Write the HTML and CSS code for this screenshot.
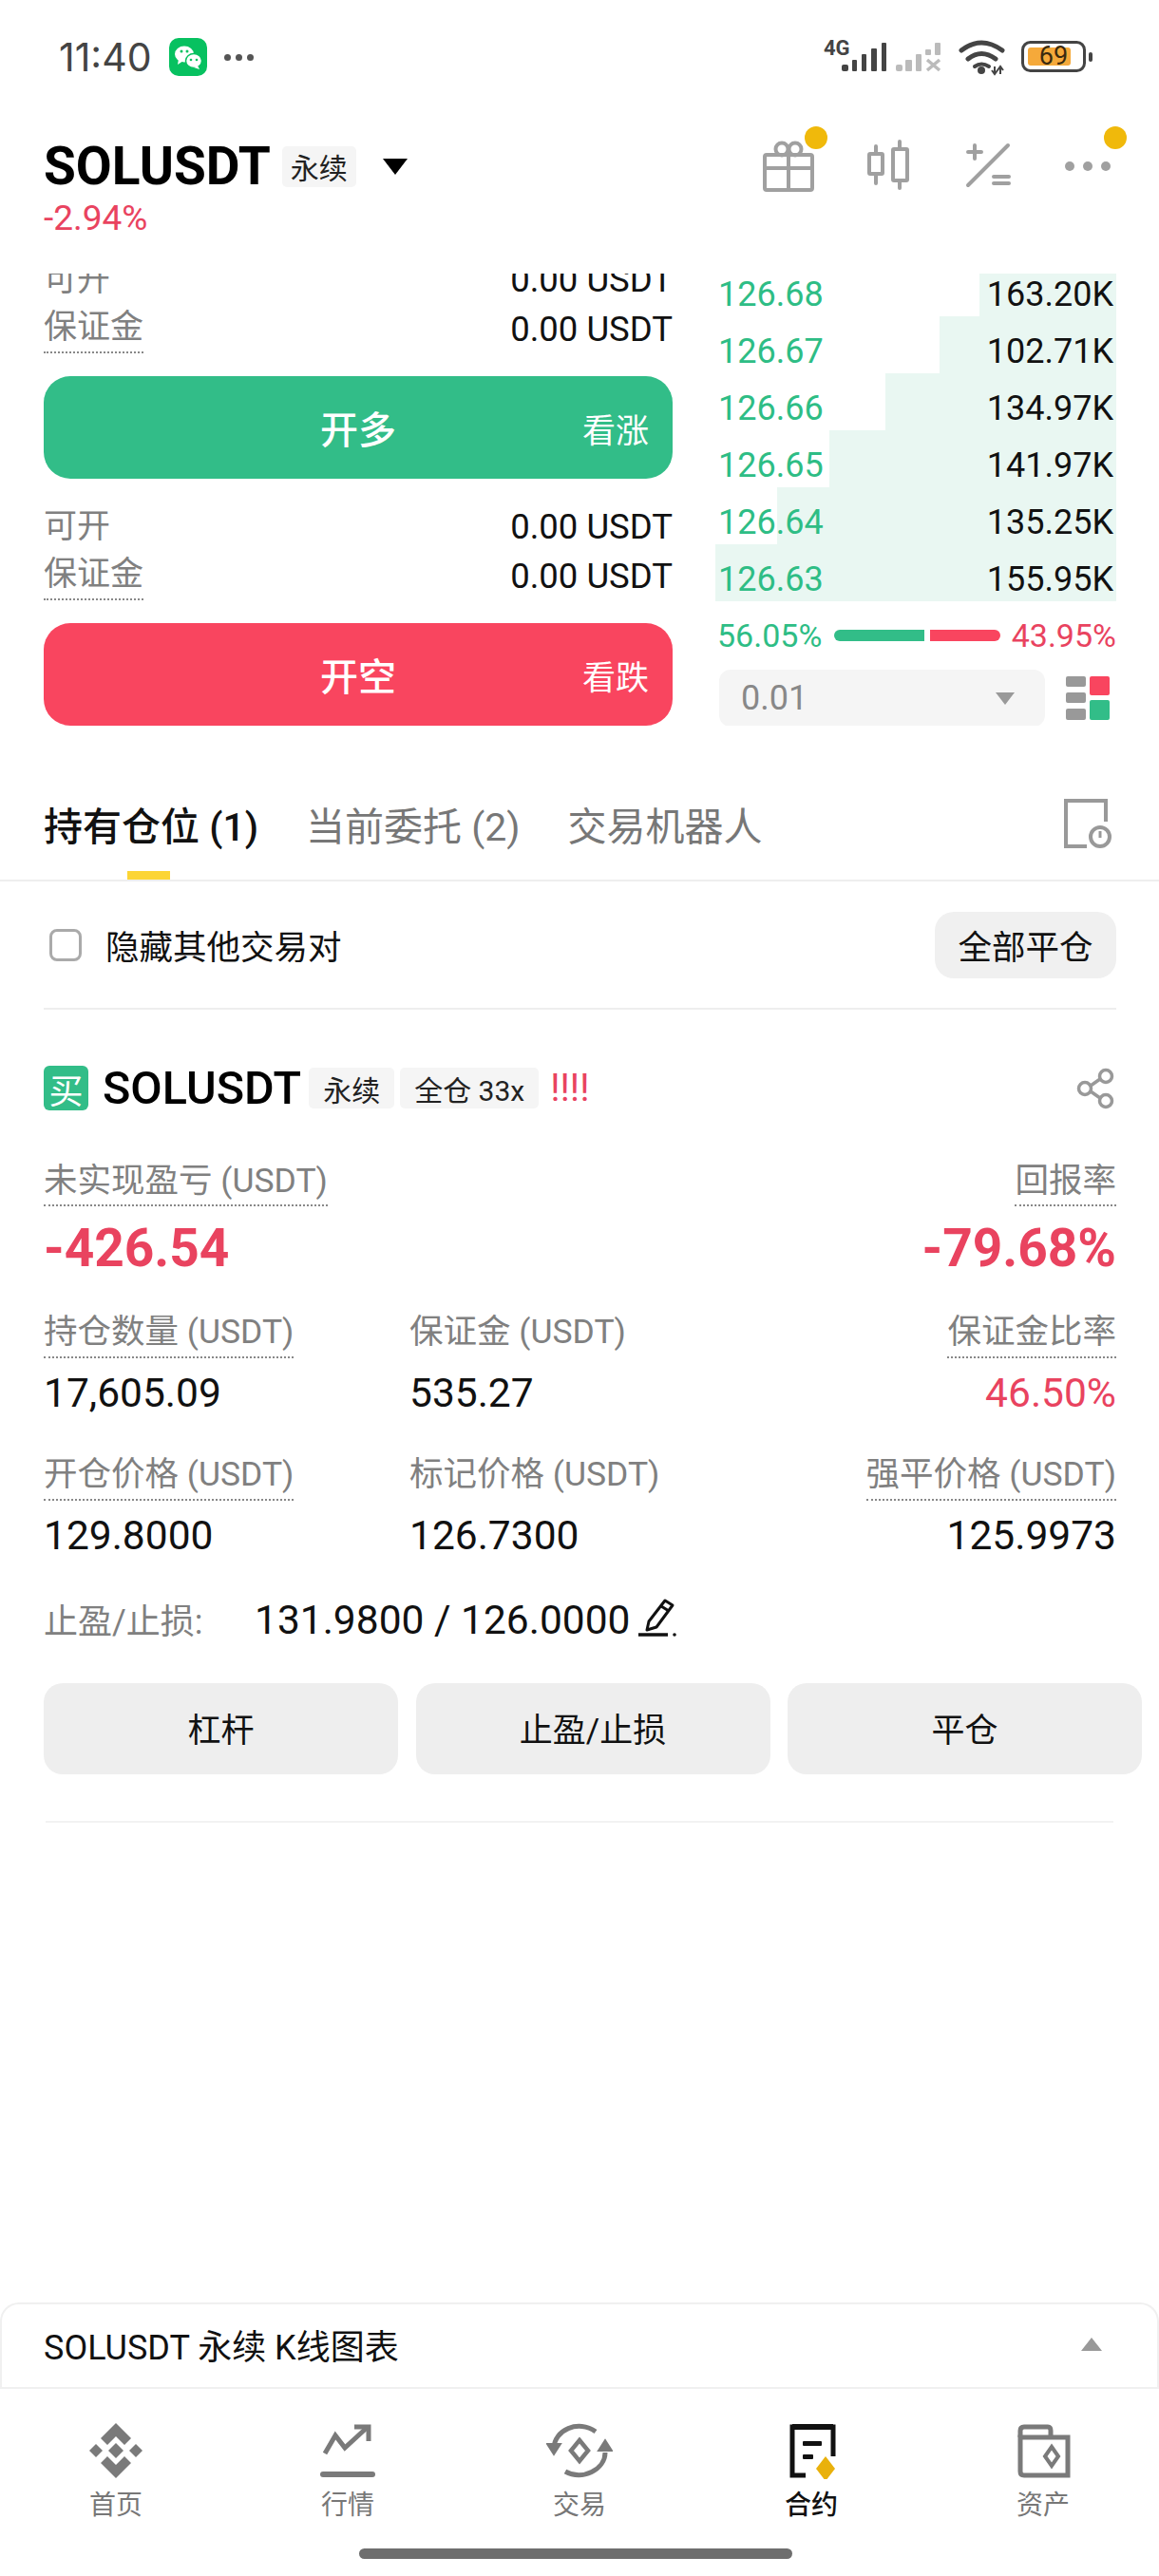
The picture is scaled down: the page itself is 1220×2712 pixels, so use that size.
FILE: index.html
```html
<!DOCTYPE html>
<html lang="zh-CN">
<head>
    <meta charset="UTF-8">
    <meta name="viewport" content="width=device-width, initial-scale=1.0">
    <title>SOLUSDT 永续</title>
    <link rel="stylesheet" href="styles.css">
</head>
<body>
    <!-- Status bar -->
    <div class="status-bar">
        <span class="status-time">11:40</span>
        <svg class="wechat" viewBox="0 0 40 40">
            <rect width="40" height="40" rx="10" fill="#07c160"/>
            <ellipse cx="16" cy="17" rx="10" ry="8.5" fill="#fff"/>
            <path d="M10 22 L9 28 L15 24 Z" fill="#fff"/>
            <ellipse cx="26" cy="24" rx="8.5" ry="7.5" fill="#fff" stroke="#07c160" stroke-width="1.5"/>
            <path d="M30 29 L32 33 L26 31 Z" fill="#fff"/>
            <circle cx="13" cy="14" r="1.5" fill="#07c160"/><circle cx="19" cy="14" r="1.5" fill="#07c160"/>
            <circle cx="23" cy="23" r="1.3" fill="#07c160"/><circle cx="29" cy="23" r="1.3" fill="#07c160"/>
        </svg>
        <span class="status-dots"><i></i><i></i><i></i></span>
        <svg class="status-icons" viewBox="0 0 290 40">
            <text class="net-label" x="1" y="18">4G</text>
            <g fill="#444">
                <rect x="20" y="28" width="7" height="7" rx="2"/><rect x="31" y="23" width="5" height="12" rx="1"/>
                <rect x="41" y="17" width="5" height="18" rx="1"/><rect x="51" y="11" width="6" height="24" rx="1"/>
                <rect x="62" y="5" width="5" height="30" rx="1"/>
            </g>
            <g fill="#bbb">
                <rect x="77" y="28" width="7" height="7" rx="2"/><rect x="87" y="23" width="7" height="12" rx="1"/>
                <rect x="98" y="17" width="6" height="18" rx="1"/><rect x="108" y="12" width="6" height="6" rx="1"/>
                <rect x="118" y="5" width="6" height="13" rx="1"/>
                <path d="M110 23 L123 34 M123 23 L110 34" stroke="#bbb" stroke-width="3.5"/>
            </g>
            <g fill="none" stroke="#444" stroke-width="5" stroke-linecap="round">
                <path d="M146 13 Q167 -3 189 13"/>
                <path d="M153 22 Q167 11 182 22"/>
                <path d="M160 30 Q167 25 175 30" stroke-width="4"/>
            </g>
            <circle cx="167" cy="34" r="4" fill="#444"/>
            <path d="M181 30 V38 M178 34 L181 38 L184 34 M187 38 V30 M184 34 L187 30 L190 34" fill="none" stroke="#444" stroke-width="2"/>
            <rect x="210.5" y="4.5" width="65" height="30" rx="8" fill="none" stroke="#444" stroke-width="3"/>
            <rect x="216" y="10" width="45" height="19" rx="3" fill="#f5a93a"/>
            <rect x="280" y="15" width="4" height="10" rx="2" fill="#444"/>
            <text class="batt-label" x="243" y="28">69</text>
        </svg>
    </div>

    <!-- Symbol header -->
    <div class="symbol-bar">
        <span class="symbol">SOLUSDT</span>
        <span class="tag tag-head">永续</span>
        <span class="caret"></span>
        <div class="symbol-tools">
            <span class="tool tool-dot">
                <svg width="60" height="60" viewBox="0 0 60 60" fill="none" stroke="#a0a0a0" stroke-width="4" stroke-linejoin="round">
                    <rect x="5" y="18" width="50" height="37" rx="2"/>
                    <path d="M5 32 H55 M30 18 V55"/>
                    <circle cx="23" cy="12" r="6.5"/><circle cx="37" cy="12" r="6.5"/>
                </svg>
            </span>
            <span class="tool">
                <svg width="60" height="60" viewBox="0 0 60 60" fill="none" stroke="#a0a0a0" stroke-width="4" stroke-linecap="round" stroke-linejoin="round">
                    <rect x="10" y="17" width="14" height="21" rx="1"/><path d="M17 9 V17 M17 38 V48"/>
                    <rect x="35" y="12" width="15" height="33" rx="1"/><path d="M42 4 V12 M42 45 V53"/>
                </svg>
            </span>
            <span class="tool">
                <svg width="60" height="60" viewBox="0 0 60 60" fill="none" stroke="#a0a0a0" stroke-width="4" stroke-linecap="round">
                    <path d="M51 8 L9 50"/>
                    <path d="M9 15 H23 M16 8 V22"/>
                    <path d="M36 41 H52 M36 48 H52"/>
                </svg>
            </span>
            <span class="tool tool-dot">
                <svg width="60" height="60" viewBox="0 0 60 60" fill="#a0a0a0">
                    <circle cx="11" cy="30" r="5"/><circle cx="30" cy="30" r="5"/><circle cx="49" cy="30" r="5"/>
                </svg>
            </span>
        </div>
    </div>
    <div class="symbol-change">-2.94%</div>

    <!-- Order form + order book -->
    <div class="trade">
        <div class="trade-form">
            <div class="form-row"><span class="form-label">可开</span><span>0.00 USDT</span></div>
            <div class="form-row"><span class="form-label dotted">保证金</span><span>0.00 USDT</span></div>
            <div class="order-btn long"><span class="order-title">开多</span><span class="order-side">看涨</span></div>
            <div class="form-row"><span class="form-label">可开</span><span>0.00 USDT</span></div>
            <div class="form-row"><span class="form-label dotted">保证金</span><span>0.00 USDT</span></div>
            <div class="order-btn short"><span class="order-title">开空</span><span class="order-side">看跌</span></div>
        </div>
        <div class="book">
            <div class="book-row"><span class="book-bar" style="width:144px"></span><span class="book-price">126.68</span><span class="book-qty">163.20K</span></div>
            <div class="book-row"><span class="book-bar" style="width:186px"></span><span class="book-price">126.67</span><span class="book-qty">102.71K</span></div>
            <div class="book-row"><span class="book-bar" style="width:243px"></span><span class="book-price">126.66</span><span class="book-qty">134.97K</span></div>
            <div class="book-row"><span class="book-bar" style="width:302px"></span><span class="book-price">126.65</span><span class="book-qty">141.97K</span></div>
            <div class="book-row"><span class="book-bar" style="width:357px"></span><span class="book-price">126.64</span><span class="book-qty">135.25K</span></div>
            <div class="book-row"><span class="book-bar" style="width:422px"></span><span class="book-price">126.63</span><span class="book-qty">155.95K</span></div>
            <div class="book-ratio">
                <span class="up">56.05%</span>
                <span class="ratio-bars"><i class="ratio-buy"></i><i class="ratio-sell"></i></span>
                <span class="down">43.95%</span>
            </div>
            <div class="book-tools">
                <div class="depth-select"><span>0.01</span><i class="select-caret"></i></div>
                <div class="book-mode">
                    <i class="mode-gray"></i><i class="mode-red"></i>
                    <i class="mode-gray"></i><i class="mode-green"></i>
                    <i class="mode-gray"></i>
                </div>
            </div>
        </div>
    </div>

    <!-- Tabs -->
    <div class="tabs">
        <span class="tab active">持有仓位 (1)</span>
        <span class="tab">当前委托 (2)</span>
        <span class="tab">交易机器人</span>
        <svg class="tabs-history" width="56" height="56" viewBox="0 0 56 56" fill="none" stroke="#999" stroke-width="4">
            <path d="M46 26 V4 H4 V52 H26"/>
            <circle cx="40" cy="42" r="10"/>
            <path d="M40 36 V43" stroke-width="3"/>
        </svg>
    </div>

    <div class="filter">
        <label class="filter-check"><i class="checkbox"></i>隐藏其他交易对</label>
        <span class="close-all">全部平仓</span>
    </div>

    <!-- Position card -->
    <div class="position">
        <div class="position-head">
            <span class="side-badge">买</span>
            <span class="position-symbol">SOLUSDT</span>
            <span class="tag">永续</span>
            <span class="tag">全仓 33x</span>
            <span class="warn">!!!!</span>
            <svg class="share" width="44" height="44" viewBox="0 0 44 44" fill="none" stroke="#999" stroke-width="3.5">
                <circle cx="32" cy="9" r="6.5"/><circle cx="10" cy="22" r="6.5"/><circle cx="32" cy="35" r="6.5"/>
                <path d="M16 19 L26 12 M16 25 L26 32"/>
            </svg>
        </div>
        <div class="pnl">
            <div>
                <span class="stat-label pnl-label dotted">未实现盈亏 (USDT)</span>
                <div class="pnl-value down">-426.54</div>
            </div>
            <div class="align-right">
                <span class="stat-label pnl-label dotted">回报率</span>
                <div class="pnl-value down">-79.68%</div>
            </div>
        </div>
        <div class="stats">
            <div><span class="stat-label dotted">持仓数量 (USDT)</span><div class="stat-value">17,605.09</div></div>
            <div><span class="stat-label">保证金 (USDT)</span><div class="stat-value">535.27</div></div>
            <div class="align-right"><span class="stat-label dotted">保证金比率</span><div class="stat-value down">46.50%</div></div>
            <div><span class="stat-label dotted">开仓价格 (USDT)</span><div class="stat-value">129.8000</div></div>
            <div><span class="stat-label">标记价格 (USDT)</span><div class="stat-value">126.7300</div></div>
            <div class="align-right"><span class="stat-label dotted">强平价格 (USDT)</span><div class="stat-value">125.9973</div></div>
        </div>
        <div class="tpsl">
            <span class="tpsl-label">止盈/止损:</span>
            <span class="stat-value">131.9800 / 126.0000</span>
            <svg class="pencil" width="42" height="40" viewBox="0 0 42 40" fill="none" stroke="#111" stroke-width="3" stroke-linejoin="round">
                <path d="M29 2 L37 7 L20 30 L10 33 L12 24 Z"/>
                <path d="M25 8 L33 13"/>
                <path d="M1 38 H32" stroke-width="3.5"/>
                <circle cx="39" cy="38" r="1.8" fill="#111" stroke="none"/>
            </svg>
        </div>
        <div class="actions">
            <span class="action">杠杆</span>
            <span class="action">止盈/止损</span>
            <span class="action">平仓</span>
        </div>
        <div class="position-end"></div>
    </div>

    <!-- Chart drawer -->
    <div class="chart-drawer">
        <span>SOLUSDT 永续 K线图表</span>
        <i class="drawer-caret"></i>
    </div>

    <!-- Bottom nav -->
    <div class="nav">
        <div class="nav-item">
            <svg width="60" height="60" viewBox="0 0 60 60" fill="#7a7a7a">
                <path d="M30 1 L46 17 L39 24 L30 15 L21 24 L14 17 Z"/>
                <path d="M30 59 L46 43 L39 36 L30 45 L21 36 L14 43 Z"/>
                <path d="M9 23 L16 30 L9 37 L2 30 Z"/>
                <path d="M51 23 L58 30 L51 37 L44 30 Z"/>
                <path d="M30 22 L38 30 L30 38 L22 30 Z"/>
            </svg>
            <span>首页</span>
        </div>
        <div class="nav-item">
            <svg width="60" height="60" viewBox="0 0 60 60" fill="none" stroke="#7a7a7a" stroke-width="5">
                <path d="M6 33 L17 14 L27 27 L50 6"/>
                <path d="M37 5 H52 V20" stroke-width="5"/>
                <path d="M4 55 H56" stroke-width="6" stroke-linecap="round"/>
            </svg>
            <span>行情</span>
        </div>
        <div class="nav-item">
            <svg width="70" height="60" viewBox="0 0 70 60" fill="none" stroke="#7a7a7a" stroke-width="5">
                <path d="M8 28 C8 8 34 -3 52 10"/>
                <path d="M62 32 C62 50 38 62 20 52"/>
                <path d="M1 23 L8 34 L15 23 Z" fill="#7a7a7a" stroke-width="2"/>
                <path d="M55 30 L62 19 L69 30 Z" fill="#7a7a7a" stroke-width="2"/>
                <path d="M35 19 L44 30 L35 41 L26 30 Z" stroke-width="4.5"/>
            </svg>
            <span>交易</span>
        </div>
        <div class="nav-item active">
            <svg width="60" height="60" viewBox="0 0 60 60">
                <path d="M24 56 H10 V5 H53 V36" fill="none" stroke="#111" stroke-width="5"/>
                <path d="M10 5 H53" stroke="#111" stroke-width="6"/>
                <rect x="21" y="20" width="20" height="5" rx="1" fill="#111"/>
                <rect x="21" y="34" width="11" height="5" rx="1" fill="#111"/>
                <path d="M45 36 L55 49 L45 62 L35 49 Z" fill="#e9b10c"/>
            </svg>
            <span>合约</span>
        </div>
        <div class="nav-item">
            <svg width="60" height="60" viewBox="0 0 60 60" fill="none" stroke="#7a7a7a" stroke-width="5">
                <path d="M6 16 V9 Q6 5 10 5 H35 Q38 5 38 9 V16"/>
                <path d="M6 16 H56 V56 H10 Q6 56 6 52 Z"/>
                <path d="M39 26 L46 36 L39 46 L32 36 Z" stroke-width="4"/>
            </svg>
            <span>资产</span>
        </div>
        <div class="home-bar"></div>
    </div>
</body>
</html>
```

FILE: styles.css
```css
/* General */
* {
    box-sizing: border-box;
}

body {
    margin: 0;
    width: 1220px;
    height: 2712px;
    display: flex;
    flex-direction: column;
    overflow: hidden;
    background: #fff;
    color: #111;
    font-family: "Roboto", "Noto Sans CJK SC", sans-serif;
    font-size: 35px;
}

i {
    display: block;
}

.up {
    color: #2ebd85;
}

.down {
    color: #e9435f;
}

.align-right {
    text-align: right;
}

.dotted {
    border-bottom: 2px dotted #888;
}

/* Status bar */
.status-bar {
    height: 130px;
    padding: 0 64px 10px 62px;
    display: flex;
    align-items: center;
    flex-shrink: 0;
}

.status-time {
    font-family: "Inter", sans-serif;
    font-size: 41px;
    color: #444;
    width: 116px;
}

.wechat {
    width: 40px;
    height: 40px;
}

.status-dots {
    display: flex;
    gap: 5px;
    margin-left: 18px;
}

.status-dots i {
    width: 7px;
    height: 7px;
    border-radius: 50%;
    background: #555;
}

.status-icons {
    width: 290px;
    height: 40px;
    margin-left: auto;
    overflow: visible;
}

.net-label {
    font-size: 22px;
    font-weight: 700;
    fill: #444;
}

.batt-label {
    font-size: 27px;
    fill: #3a2a10;
    text-anchor: middle;
}

/* Symbol header */
.symbol-bar {
    height: 90px;
    padding-left: 46px;
    display: flex;
    align-items: center;
    flex-shrink: 0;
}

.symbol {
    font-size: 55px;
    font-weight: 700;
    color: #000;
}

.tag {
    height: 43px;
    padding: 0 15px;
    display: flex;
    align-items: center;
    background: #f5f5f5;
    border-radius: 5px;
    font-size: 30px;
    color: #222;
}

.tag-head {
    margin-left: 12px;
    padding: 0 9px;
}

.caret {
    width: 0;
    height: 0;
    margin-left: 28px;
    border-left: 13px solid transparent;
    border-right: 13px solid transparent;
    border-top: 17px solid #000;
}

.symbol-tools {
    margin-left: auto;
    padding-right: 23px;
    display: flex;
}

.tool {
    width: 105px;
    display: flex;
    justify-content: center;
    position: relative;
}

.tool-dot::after {
    content: "";
    position: absolute;
    left: 70px;
    top: -12px;
    width: 24px;
    height: 24px;
    border-radius: 50%;
    background: #f0b90b;
}

.symbol-change {
    height: 76px;
    margin-top: -8px;
    padding-left: 46px;
    font-size: 37px;
    line-height: 36px;
    color: #e9435f;
    flex-shrink: 0;
}

/* Order form + book */
.trade {
    height: 476px;
    padding: 0 45px 0 46px;
    display: flex;
    gap: 45px;
    overflow: hidden;
    flex-shrink: 0;
}

.trade-form {
    width: 662px;
    margin-top: -18px;
    flex-shrink: 0;
}

.form-row {
    height: 50px;
    margin-bottom: 2px;
    display: flex;
    justify-content: space-between;
    align-items: flex-start;
    line-height: 50px;
    font-size: 36.5px;
}

.form-label {
    height: 50px;
    line-height: 50px;
    font-size: 35px;
    color: #808080;
}

.form-label.dotted {
    line-height: 46px;
}

.order-btn {
    height: 108px;
    margin: 24px 0 26px;
    border-radius: 28px;
    color: #fff;
    position: relative;
    display: flex;
    align-items: center;
    justify-content: center;
}

.order-btn.long {
    background: #32bd88;
}

.order-btn.short {
    background: #f9455f;
}

.order-title {
    font-size: 40px;
    font-weight: 500;
}

.order-side {
    position: absolute;
    right: 25px;
    font-size: 35px;
}

.book {
    width: 422px;
    margin-top: -15px;
}

.book-row {
    height: 60px;
    padding: 14px 3px 0 3px;
    display: flex;
    justify-content: space-between;
    line-height: 46px;
    font-size: 36px;
    position: relative;
}

.book-bar {
    position: absolute;
    right: 0;
    top: 0;
    bottom: 0;
    background: #e9f7f2;
}

.book-price,
.book-qty {
    position: relative;
}

.book-price {
    color: #2ebd85;
}

.book-ratio {
    height: 72px;
    padding: 0 0 0 2px;
    display: flex;
    align-items: center;
    justify-content: space-between;
    font-size: 34px;
}

.ratio-bars {
    display: flex;
    gap: 6px;
}

.ratio-buy {
    width: 95px;
    height: 12px;
    background: #32bd88;
    border-radius: 6px 0 0 6px;
}

.ratio-sell {
    width: 74px;
    height: 12px;
    background: #f9455f;
    border-radius: 0 6px 6px 0;
}

.book-tools {
    padding-left: 4px;
    display: flex;
    justify-content: space-between;
    align-items: center;
}

.depth-select {
    width: 343px;
    height: 60px;
    padding: 0 32px 0 23px;
    display: flex;
    justify-content: space-between;
    align-items: center;
    background: #f5f5f5;
    border-radius: 12px;
    font-size: 36px;
    color: #888;
}

.select-caret {
    width: 0;
    height: 0;
    border-left: 10px solid transparent;
    border-right: 10px solid transparent;
    border-top: 13px solid #999;
}

.book-mode {
    width: 46px;
    height: 46px;
    margin-right: 7px;
    display: grid;
    grid-template-columns: 21px 21px;
    grid-template-rows: 11px 6px 11px 6px 12px;
    column-gap: 4px;
}

.book-mode i {
    border-radius: 2px;
}

.mode-gray {
    background: #999;
    grid-column: 1;
}

.mode-gray:nth-child(1) {
    grid-row: 1;
}

.mode-gray:nth-child(3) {
    grid-row: 3;
}

.mode-gray:nth-child(5) {
    grid-row: 5;
}

.mode-red {
    background: #f9455f;
    grid-column: 2;
    grid-row: 1 / 4;
    height: 20px;
}

.mode-green {
    background: #32bd88;
    grid-column: 2;
    grid-row: 3 / 6;
    height: 21px;
    align-self: end;
}

/* Tabs */
.tabs {
    height: 164px;
    padding: 44px 46px 0 46px;
    display: flex;
    gap: 50px;
    align-items: center;
    border-bottom: 2px solid #eee;
    flex-shrink: 0;
}

.tab {
    height: 100%;
    display: flex;
    align-items: center;
    font-size: 41px;
    color: #777;
    position: relative;
}

.tab.active {
    color: #111;
    font-weight: 500;
}

.tab.active::after {
    content: "";
    position: absolute;
    left: 88px;
    bottom: 0;
    width: 45px;
    height: 9px;
    background: #fcd535;
}

.tabs-history {
    margin-left: auto;
}

.filter {
    height: 135px;
    margin: 0 45px 0 46px;
    padding-left: 6px;
    display: flex;
    justify-content: space-between;
    align-items: center;
    border-bottom: 2px solid #eee;
    flex-shrink: 0;
}

.filter-check {
    display: flex;
    align-items: center;
    gap: 25px;
    font-size: 35.5px;
}

.checkbox {
    width: 34px;
    height: 34px;
    border: 3px solid #aaa;
    border-radius: 8px;
}

.close-all {
    width: 191px;
    height: 70px;
    display: flex;
    align-items: center;
    justify-content: center;
    background: #f0f0f0;
    border-radius: 20px;
    font-size: 35.5px;
}

/* Position card */
.position {
    flex: 1;
    padding: 59px 45px 0 46px;
}

.position-head {
    height: 47px;
    display: flex;
    align-items: center;
    gap: 6px;
}

.side-badge {
    width: 47px;
    height: 47px;
    display: flex;
    align-items: center;
    justify-content: center;
    background: #32bd88;
    border-radius: 6px;
    color: #fff;
    font-size: 36px;
}

.position-symbol {
    margin: 0 2px 0 9px;
    font-size: 48.5px;
    font-weight: 500;
    color: #000;
}

.warn {
    margin-left: 6px;
    font-size: 40px;
    line-height: 47px;
    color: #e9435f;
}

.share {
    margin-left: auto;
    margin-right: -1px;
}

.pnl {
    margin-top: 53px;
    display: flex;
    justify-content: space-between;
}

.stat-label {
    display: block;
    width: fit-content;
    line-height: 42px;
    padding-bottom: 5px;
    border-bottom: 2px solid transparent;
    font-size: 35.5px;
    color: #808080;
}

.stat-label.dotted {
    border-bottom: 2px dotted #888;
}

.align-right .stat-label {
    margin-left: auto;
}

.pnl-label {
    padding-bottom: 4px;
}

.pnl-value {
    margin-top: 14px;
    line-height: 60px;
    font-size: 55px;
    font-weight: 700;
}

.stats {
    margin-top: 37px;
    display: grid;
    grid-template-columns: 385px 1fr auto;
    row-gap: 39px;
}

.stat-value {
    line-height: 50px;
    font-size: 42.5px;
    margin-top: 12px;
}

.tpsl {
    margin-top: 39px;
    height: 50px;
    display: flex;
    align-items: center;
}

.tpsl .stat-value {
    margin: 0 8px 0 0;
}

.tpsl-label {
    width: 222px;
    padding-bottom: 4px;
    font-size: 36px;
    color: #808080;
}

.pencil {
    margin-top: -6px;
}

.actions {
    margin-top: 41px;
    display: flex;
    gap: 18.5px;
}

.action {
    width: 373px;
    height: 96px;
    padding-bottom: 3px;
    flex-shrink: 0;
    display: flex;
    align-items: center;
    justify-content: center;
    background: #eee;
    border-radius: 20px;
    font-size: 35px;
}

.position-end {
    height: 2px;
    margin: 49px 3px 0 2px;
    background: #f2f2f2;
}

/* Chart drawer */
.chart-drawer {
    height: 89px;
    padding: 0 58px 4px 44px;
    display: flex;
    justify-content: space-between;
    align-items: center;
    border: 2px solid #f0f0f0;
    border-bottom: 0;
    border-radius: 20px 20px 0 0;
    font-size: 36px;
    flex-shrink: 0;
}

.drawer-caret {
    width: 0;
    height: 0;
    border-left: 11px solid transparent;
    border-right: 11px solid transparent;
    border-bottom: 14px solid #999;
}

/* Bottom nav */
.nav {
    height: 199px;
    padding-top: 35px;
    display: grid;
    grid-template-columns: repeat(5, 244px);
    align-content: start;
    border-top: 2px solid #f0f0f0;
    flex-shrink: 0;
    position: relative;
}

.nav-item {
    display: flex;
    flex-direction: column;
    align-items: center;
    font-size: 28px;
    color: #777;
}

.nav-item span {
    margin-top: 8px;
    line-height: 40px;
}

.nav-item.active {
    color: #111;
    font-weight: 500;
}

.home-bar {
    position: absolute;
    left: 378px;
    bottom: 18px;
    width: 456px;
    height: 11px;
    background: #6e6e6e;
    border-radius: 6px;
}
```
